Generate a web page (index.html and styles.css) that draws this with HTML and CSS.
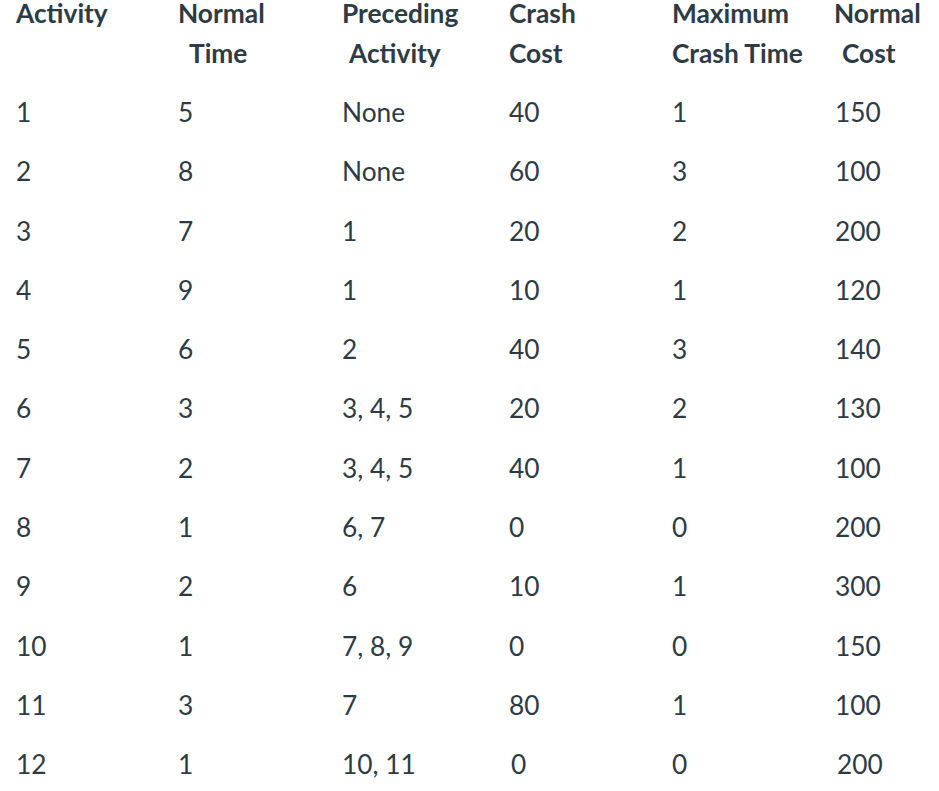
FILE: index.html
```html
<!DOCTYPE html>
<html>
<head>
<meta charset="utf-8">
<link rel="stylesheet" href="styles.css">
</head>
<body>
<div class="table">
  <div class="row head">
    <div class="cell">Activity</div>
    <div class="cell">Normal<br><span class="ind-time">Time</span></div>
    <div class="cell">Preceding<br><span class="ind-act">Activity</span></div>
    <div class="cell">Crash<br>Cost</div>
    <div class="cell">Maximum<br>Crash Time</div>
    <div class="cell">Normal<br><span class="ind-cost">Cost</span></div>
  </div>
  <div class="row"><div class="cell">1</div><div class="cell">5</div><div class="cell">None</div><div class="cell">40</div><div class="cell">1</div><div class="cell">150</div></div>
  <div class="row"><div class="cell">2</div><div class="cell">8</div><div class="cell">None</div><div class="cell">60</div><div class="cell">3</div><div class="cell">100</div></div>
  <div class="row"><div class="cell">3</div><div class="cell">7</div><div class="cell">1</div><div class="cell">20</div><div class="cell">2</div><div class="cell">200</div></div>
  <div class="row"><div class="cell">4</div><div class="cell">9</div><div class="cell">1</div><div class="cell">10</div><div class="cell">1</div><div class="cell">120</div></div>
  <div class="row"><div class="cell">5</div><div class="cell">6</div><div class="cell">2</div><div class="cell">40</div><div class="cell">3</div><div class="cell">140</div></div>
  <div class="row"><div class="cell">6</div><div class="cell">3</div><div class="cell">3, 4, 5</div><div class="cell">20</div><div class="cell">2</div><div class="cell">130</div></div>
  <div class="row"><div class="cell">7</div><div class="cell">2</div><div class="cell">3, 4, 5</div><div class="cell">40</div><div class="cell">1</div><div class="cell">100</div></div>
  <div class="row"><div class="cell">8</div><div class="cell">1</div><div class="cell">6, 7</div><div class="cell">0</div><div class="cell">0</div><div class="cell">200</div></div>
  <div class="row"><div class="cell">9</div><div class="cell">2</div><div class="cell">6</div><div class="cell">10</div><div class="cell">1</div><div class="cell">300</div></div>
  <div class="row"><div class="cell">10</div><div class="cell">1</div><div class="cell">7, 8, 9</div><div class="cell">0</div><div class="cell">0</div><div class="cell">150</div></div>
  <div class="row"><div class="cell">11</div><div class="cell">3</div><div class="cell">7</div><div class="cell">80</div><div class="cell">1</div><div class="cell">100</div></div>
  <div class="row"><div class="cell">12</div><div class="cell">1</div><div class="cell">10, 11</div><div class="cell nudge">0</div><div class="cell">0</div><div class="cell nudge">200</div></div>
</div>
</body>
</html>
```
FILE: styles.css
```css
html, body {
  margin: 0;
  padding: 0;
  background: #ffffff;
}
body {
  font-family: Lato, "Open Sans", sans-serif;
  font-size: 26.3px;
  color: #2d3b45;
  overflow: hidden;
}
.table {
  margin-top: -7px;
  padding-left: 16px;
}
.row {
  display: grid;
  grid-template-columns: 162px 164px 167px 163px 162px 100px;
  height: 59.3px;
  line-height: 59.3px;
}
.row .cell:last-child {
  padding-left: 1px;
}
.row.head {
  height: 90px;
  line-height: 40px;
  font-weight: 700;
}
.row.head .cell:last-child {
  padding-left: 0;
}
.cell {
  white-space: nowrap;
}
.cell.nudge {
  padding-left: 2px;
}
.row .cell.nudge:last-child {
  padding-left: 3px;
}
.ind-time {
  margin-left: 11px;
}
.ind-act {
  margin-left: 7px;
}
.ind-cost {
  margin-left: 8px;
}
```
